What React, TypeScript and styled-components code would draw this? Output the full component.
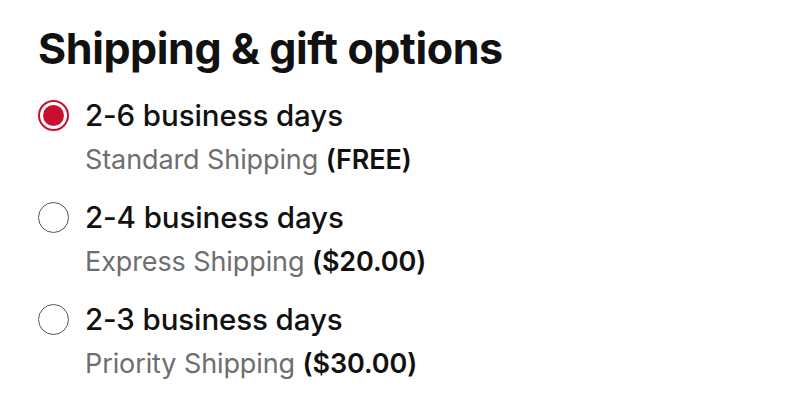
import React, { useState } from "react";
import styled, { createGlobalStyle } from "styled-components";

const Global = createGlobalStyle`
  html, body { margin: 0; padding: 0; background: #fff; }
  body { font-family: Inter, "Noto Sans", sans-serif; -webkit-font-smoothing: antialiased; }
`;

const Page = styled.div`
  padding: 22px 0 0 38px;
`;

const Title = styled.h2`
  margin: 0 0 23px 0;
  font-size: 43px;
  line-height: 52px;
  font-weight: 700;
  color: #111;
  letter-spacing: -0.4px;
`;

const List = styled.div`
  display: flex;
  flex-direction: column;
  gap: 12px;
`;

const Option = styled.label`
  display: grid;
  grid-template-columns: 30px 1fr;
  column-gap: 17px;
  align-items: start;
  cursor: pointer;
`;

const Radio = styled.span<{ $checked: boolean }>`
  box-sizing: border-box;
  width: 31px;
  height: 31px;
  margin-top: 3px;
  border-radius: 50%;
  border: ${(p) => (p.$checked ? "2px solid #c8102e" : "1.5px solid #555")};
  display: flex;
  align-items: center;
  justify-content: center;
  &::after {
    content: "";
    width: 21px;
    height: 21px;
    border-radius: 50%;
    background: ${(p) => (p.$checked ? "#c8102e" : "transparent")};
  }
`;

const Texts = styled.div`
  display: flex;
  flex-direction: column;
`;

const Days = styled.div`
  font-size: 29.5px;
  line-height: 36px;
  font-weight: 500;
  color: #111;
  letter-spacing: -0.1px;
`;

const Sub = styled.div`
  font-size: 27px;
  line-height: 54px;
  font-weight: 400;
  color: #6e6e6e;
  letter-spacing: -0.1px;
`;

const Price = styled.span`
  font-weight: 600;
  color: #111;
`;

const options = [
  { days: "2-6 business days", name: "Standard Shipping", price: "(FREE)" },
  { days: "2-4 business days", name: "Express Shipping", price: "($20.00)" },
  { days: "2-3 business days", name: "Priority Shipping", price: "($30.00)" },
];

export default function App() {
  const [sel, setSel] = useState(0);
  return (
    <Page>
      <Global />
      <Title>Shipping &amp; gift options</Title>
      <List>
        {options.map((o, i) => (
          <Option key={o.days} onClick={() => setSel(i)}>
            <Radio $checked={sel === i} />
            <Texts>
              <Days>{o.days}</Days>
              <Sub>
                {o.name} <Price>{o.price}</Price>
              </Sub>
            </Texts>
          </Option>
        ))}
      </List>
    </Page>
  );
}
